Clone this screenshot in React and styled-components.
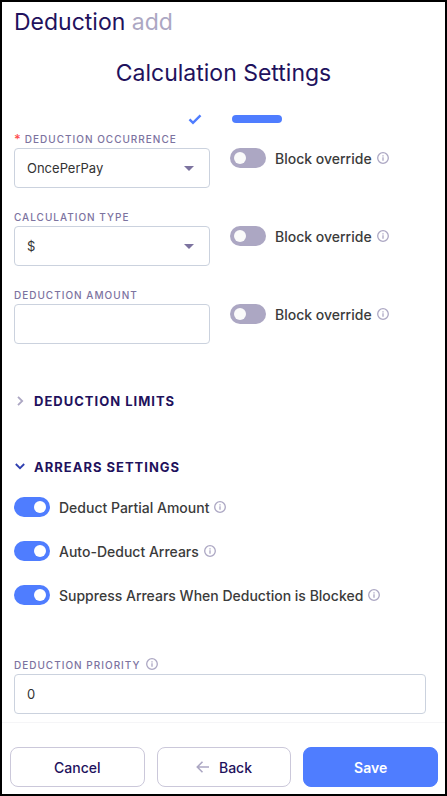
import React, { useState } from "react";
import styled, { createGlobalStyle } from "styled-components";

const fields = [
  {
    id: "occurrence",
    label: "Deduction occurrence",
    required: true,
    options: ["OncePerPay", "EveryPay", "Monthly"],
  },
  { id: "calcType", label: "Calculation type", options: ["$", "%"] },
  { id: "amount", label: "Deduction amount" },
];

const arrears = [
  { id: "partial", label: "Deduct Partial Amount" },
  { id: "auto", label: "Auto-Deduct Arrears" },
  { id: "suppress", label: "Suppress Arrears When Deduction is Blocked" },
];

const Info = () => {
  return (
    <InfoIcon viewBox="0 0 12 12">
      <circle cx="6" cy="6" r="5.3" />
      <path d="M6 5.3v3.4M6 3.2v1.3" />
    </InfoIcon>
  );
};

const Toggle = ({ id, label, defaultChecked }) => {
  return (
    <ToggleRow>
      <Switch
        type="checkbox"
        role="switch"
        id={id}
        defaultChecked={defaultChecked}
      />
      <ToggleLabel htmlFor={id}>{label}</ToggleLabel>
      <Info />
    </ToggleRow>
  );
};

const Field = ({ id, label, required, options }) => {
  const [value, setValue] = useState(options ? options[0] : "");
  const onChange = (e) => setValue(e.target.value);
  return (
    <FieldRow>
      <div>
        <Label htmlFor={id}>
          {required && <Required>*</Required>}
          {label}
        </Label>
        {options ? (
          <SelectWrap>
            <Select id={id} value={value} onChange={onChange}>
              {options.map((item) => (
                <option key={item}>{item}</option>
              ))}
            </Select>
            <Caret viewBox="0 0 10 5">
              <path d="M0 0h10L5 5z" fill="currentColor" />
            </Caret>
          </SelectWrap>
        ) : (
          <Input id={id} value={value} onChange={onChange} />
        )}
      </div>
      <Toggle id={`${id}-block`} label="Block override" />
    </FieldRow>
  );
};

const Section = ({ title, open, onClick }) => {
  return (
    <SectionButton type="button" aria-expanded={open} onClick={onClick}>
      <Chevron viewBox="0 0 12 12" $open={open}>
        <path d={open ? "M1.8 3 6 7.2 10.2 3" : "M4 1.8 8.2 6 4 10.2"} />
      </Chevron>
      {title}
    </SectionButton>
  );
};

const App = () => {
  const [limitsOpen, setLimitsOpen] = useState(false);
  const [arrearsOpen, setArrearsOpen] = useState(true);
  const [priority, setPriority] = useState("0");

  return (
    <Page>
      <GlobalStyle />
      <Title>
        Deduction <span>add</span>
      </Title>
      <Subtitle>Calculation Settings</Subtitle>
      <Steps>
        <Step>
          <Check viewBox="0 0 14 12">
            <path d="M1.5 6.3 5 9.8 12.5 2.3" />
          </Check>
        </Step>
        <Step>
          <Bar />
        </Step>
      </Steps>
      <Content>
        <FieldList>
          {fields.map((item) => (
            <Field key={item.id} {...item} />
          ))}
        </FieldList>
        <Sections>
          <Section
            title="Deduction limits"
            open={limitsOpen}
            onClick={() => setLimitsOpen(!limitsOpen)}
          />
          <Section
            title="Arrears settings"
            open={arrearsOpen}
            onClick={() => setArrearsOpen(!arrearsOpen)}
          />
        </Sections>
        {arrearsOpen && (
          <ToggleList>
            {arrears.map((item) => (
              <Toggle key={item.id} {...item} defaultChecked />
            ))}
          </ToggleList>
        )}
        <Priority>
          <LabelRow>
            <Label htmlFor="priority">Deduction priority</Label>
            <Info />
          </LabelRow>
          <Input
            id="priority"
            value={priority}
            onChange={(e) => setPriority(e.target.value)}
          />
        </Priority>
      </Content>
      <Footer>
        <Button type="button">Cancel</Button>
        <Button type="button">
          <Arrow viewBox="0 0 14 14">
            <path d="M13 7H1.5M6.5 1.8 1.3 7l5.2 5.2" />
          </Arrow>
          Back
        </Button>
        <Button type="submit" $primary>
          Save
        </Button>
      </Footer>
    </Page>
  );
};

export default App;

const GlobalStyle = createGlobalStyle`
  * {
    box-sizing: border-box;
  }
  body {
    margin: 0;
    background: #fff;
  }
  body, button, input, select {
    font-family: Inter, "Liberation Sans", sans-serif;
  }
`;

const Page = styled.main`
  display: flex;
  flex-direction: column;
  min-height: 100vh;
  padding-top: 6px;
  border: 2px solid #000;
`;
const Title = styled.h1`
  margin: 0;
  padding: 0 12px;
  font-size: 23px;
  line-height: 28px;
  font-weight: 400;
  color: #1f125d;
  span {
    color: #aca7c3;
  }
`;
const Subtitle = styled.h2`
  margin: 23px 0 24px;
  font-size: 23px;
  line-height: 28px;
  font-weight: 400;
  text-align: center;
  color: #1f125d;
`;
const Steps = styled.div`
  display: flex;
  justify-content: center;
  gap: 12px;
  height: 16px;
  padding-left: 4px;
`;
const Step = styled.div`
  display: flex;
  align-items: center;
  justify-content: center;
  width: 50px;
`;
const Check = styled.svg`
  width: 14px;
  height: 12px;
  fill: none;
  stroke: #4f7dff;
  stroke-width: 2.4;
`;
const Bar = styled.div`
  width: 100%;
  height: 8px;
  border-radius: 4px;
  background: #4f7dff;
`;
const Content = styled.div`
  flex: 1;
  padding: 5px 19px 8px 12px;
`;
const FieldList = styled.div`
  display: grid;
  gap: 22px;
`;
const FieldRow = styled.div`
  display: grid;
  grid-template-columns: 1fr 1fr;
  column-gap: 20px;
  > :last-child {
    margin-top: 16px;
  }
`;
const Label = styled.label`
  display: flex;
  padding-bottom: 2px;
  font-size: 10px;
  line-height: 14px;
  font-weight: 500;
  letter-spacing: 1px;
  text-transform: uppercase;
  color: #7c739f;
`;
const Required = styled.span`
  margin-right: 3px;
  font-size: 13px;
  color: #ff4d4f;
`;
const LabelRow = styled.div`
  display: flex;
`;
const Input = styled.input`
  display: block;
  width: 100%;
  height: 40px;
  padding: 0 12px;
  border: 1px solid #cbd2de;
  border-radius: 4px;
  background: #fff;
  font-size: 13px;
  color: #333;
`;
const SelectWrap = styled.div`
  position: relative;
`;
const Select = styled(Input).attrs({ as: "select" })`
  appearance: none;
`;
const Caret = styled.svg`
  position: absolute;
  top: 18px;
  right: 16px;
  width: 10px;
  height: 5px;
  color: #7c739f;
  pointer-events: none;
`;
const ToggleRow = styled.div`
  display: flex;
  align-items: center;
  height: 20px;
`;
const Switch = styled.input`
  appearance: none;
  display: flex;
  align-items: center;
  flex: none;
  width: 36px;
  height: 20px;
  margin: 0 9px 0 0;
  padding: 0 4px;
  border-radius: 10px;
  background: #aca7c3;
  cursor: pointer;
  &::before {
    content: "";
    width: 12px;
    height: 12px;
    border-radius: 50%;
    background: #fafafa;
  }
  &:checked {
    justify-content: flex-end;
    background: #4f7dff;
  }
  &:checked::before {
    background: #fff;
  }
`;
const ToggleLabel = styled.label`
  padding-top: 2px;
  font-size: 14px;
  line-height: 20px;
  font-weight: 500;
  color: #3b3b3b;
`;
const InfoIcon = styled.svg`
  flex: none;
  width: 12px;
  height: 12px;
  margin-left: 5px;
  fill: none;
  stroke: #aca7c3;
  stroke-width: 1.3;
`;
const Sections = styled.div`
  display: grid;
  gap: 46px;
  margin: 47px 0 20px;
`;
const SectionButton = styled.button`
  display: flex;
  align-items: center;
  gap: 8px;
  padding: 0;
  border: none;
  background: none;
  font-size: 13px;
  line-height: 20px;
  font-weight: 700;
  letter-spacing: 1px;
  text-transform: uppercase;
  color: #1f125d;
  cursor: pointer;
`;
const Chevron = styled.svg`
  width: 12px;
  height: 12px;
  fill: none;
  stroke: ${(props) => (props.$open ? "#2f3fb0" : "#aca7c3")};
  stroke-width: 1.8;
`;
const ToggleList = styled.div`
  display: grid;
  gap: 24px;
`;
const Priority = styled.div`
  margin-top: 53px;
`;
const Footer = styled.footer`
  display: grid;
  grid-template-columns: repeat(3, 1fr);
  gap: 12px;
  padding: 24px 7px 7px 8px;
  border-top: 1px solid #f5f5f7;
`;
const Button = styled.button`
  display: flex;
  align-items: center;
  justify-content: center;
  gap: 9px;
  height: 40px;
  border: 1px solid ${(props) => (props.$primary ? "#4f7dff" : "#cbc8da")};
  border-radius: 8px;
  background: ${(props) => (props.$primary ? "#4f7dff" : "#fff")};
  font-size: 14px;
  font-weight: ${(props) => (props.$primary ? 600 : 500)};
  color: ${(props) => (props.$primary ? "#fff" : "#1f125d")};
  cursor: pointer;
`;
const Arrow = styled.svg`
  width: 14px;
  height: 14px;
  fill: none;
  stroke: #aca7c3;
  stroke-width: 1.6;
`;
